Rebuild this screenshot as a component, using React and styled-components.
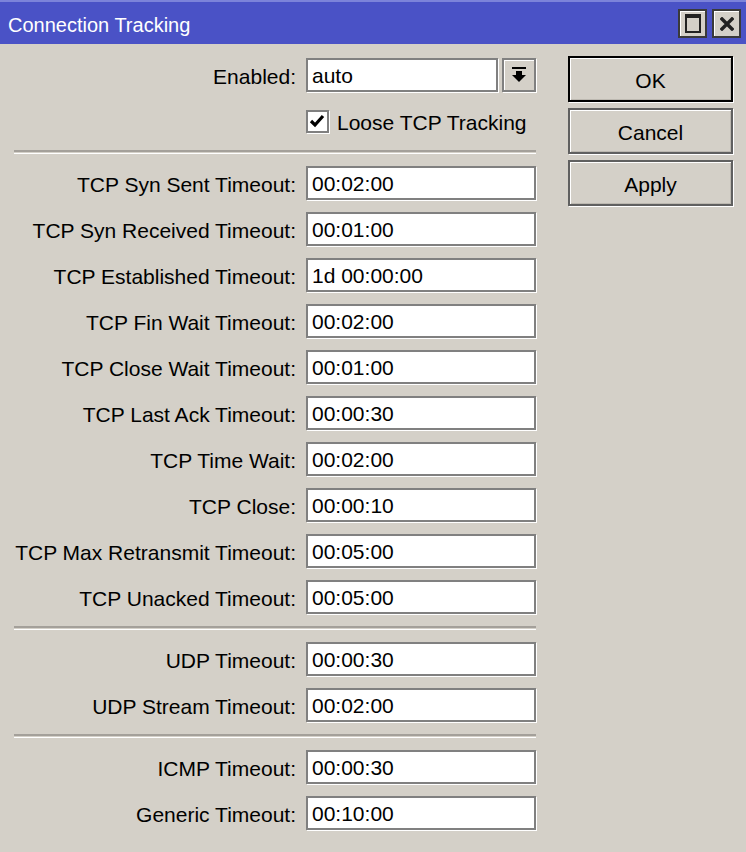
import styled, { createGlobalStyle } from "styled-components";

const GlobalStyle = createGlobalStyle`
    html, body {
        margin: 0;
        padding: 0;
        background: #d4d0c8;
    }
    * {
        box-sizing: border-box;
    }
`

const timeouts = [
    ["TCP Syn Sent Timeout:", "00:02:00"],
    ["TCP Syn Received Timeout:", "00:01:00"],
    ["TCP Established Timeout:", "1d 00:00:00"],
    ["TCP Fin Wait Timeout:", "00:02:00"],
    ["TCP Close Wait Timeout:", "00:01:00"],
    ["TCP Last Ack Timeout:", "00:00:30"],
    ["TCP Time Wait:", "00:02:00"],
    ["TCP Close:", "00:00:10"],
    ["TCP Max Retransmit Timeout:", "00:05:00"],
    ["TCP Unacked Timeout:", "00:05:00"],
]

const udp = [
    ["UDP Timeout:", "00:00:30"],
    ["UDP Stream Timeout:", "00:02:00"],
]

const other = [
    ["ICMP Timeout:", "00:00:30"],
    ["Generic Timeout:", "00:10:00"],
]

function Field({ label, value }){
    return(
        <>
            <Label>{label}</Label>
            <TextBox>{value}</TextBox>
        </>
    )
}

export default function App(){
    return(
        <Window>
            <GlobalStyle />
            <TitleBar>
                <Title>Connection Tracking</Title>
                <TitleButtons>
                    <TitleButton>
                        <svg width="16" height="19" viewBox="0 0 16 19">
                            <rect x="0" y="0" width="16" height="4" fill="#222" />
                            <rect x="0" y="0" width="2" height="19" fill="#222" />
                            <rect x="14" y="0" width="2" height="19" fill="#222" />
                            <rect x="0" y="17" width="16" height="2" fill="#222" />
                        </svg>
                    </TitleButton>
                    <TitleButton>
                        <svg width="14" height="14" viewBox="0 0 14 14">
                            <path d="M2 2 L12 12 M12 2 L2 12" stroke="#222" strokeWidth="3.4" strokeLinecap="square" />
                        </svg>
                    </TitleButton>
                </TitleButtons>
            </TitleBar>
            <Body>
                <Form>
                    <Label>Enabled:</Label>
                    <Combo>
                        <TextBox>auto</TextBox>
                        <DropButton>
                            <svg width="14" height="16" viewBox="0 0 14 16">
                                <rect x="0" y="0" width="14" height="2" fill="#000" />
                                <rect x="4" y="4" width="6" height="4" fill="#000" />
                                <polygon points="0,8 14,8 7,15" fill="#000" />
                            </svg>
                        </DropButton>
                    </Combo>

                    <span />
                    <CheckRow>
                        <CheckBox>
                            <svg width="19" height="19" viewBox="0 0 19 19">
                                <polyline points="3,9 7,13 15,4" fill="none" stroke="#000" strokeWidth="3.2" />
                            </svg>
                        </CheckBox>
                        <CheckText>Loose TCP Tracking</CheckText>
                    </CheckRow>

                    <Separator />
                    {timeouts.map(([l, v]) => <Field key={l} label={l} value={v} />)}
                    <Separator />
                    {udp.map(([l, v]) => <Field key={l} label={l} value={v} />)}
                    <Separator />
                    {other.map(([l, v]) => <Field key={l} label={l} value={v} />)}
                </Form>
                <Buttons>
                    <Button $default>OK</Button>
                    <Button>Cancel</Button>
                    <Button>Apply</Button>
                </Buttons>
            </Body>
        </Window>
    )
}

const Window = styled.div`
    width: 746px;
    height: 852px;
    background: #d4d0c8;
    font-family: "Liberation Sans", Arial, sans-serif;
    color: #000;
    overflow: hidden;
`

const TitleBar = styled.div`
    display: flex;
    align-items: center;
    justify-content: space-between;
    height: 44px;
    background: #4a52c6;
    border-top: 2px solid #7c83da;
    padding: 0 5px 0 8px;
`

const Title = styled.div`
    color: #ffffff;
    font-size: 20px;
    margin-top: 5px;
`

const TitleButtons = styled.div`
    display: flex;
    gap: 5px;
    margin-top: 1px;
`

const TitleButton = styled.div`
    width: 29px;
    height: 29px;
    display: flex;
    align-items: center;
    justify-content: center;
    background: #d4d0c8;
    border: 2px solid #3a3a3a;
    box-shadow: inset 1px 1px 0 #ffffff;
`

const Body = styled.div`
    display: flex;
    gap: 32px;
    padding: 12px 0 0 14px;
`

const Form = styled.div`
    display: grid;
    grid-template-columns: 282px 230px;
    column-gap: 10px;
    row-gap: 12px;
    margin-top: 2px;
    align-items: center;
`

const Label = styled.div`
    font-size: 21px;
    text-align: right;
    white-space: nowrap;
    padding-top: 3px;
`

const TextBox = styled.div`
    height: 34px;
    background: #ffffff;
    border: 2px solid #808080;
    box-shadow: 1px 1px 0 #ffffff;
    padding: 2px 4px 0;
    font-size: 21px;
    line-height: 28px;
    white-space: nowrap;
`

const Combo = styled.div`
    display: grid;
    grid-template-columns: 1fr 34px;
    gap: 4px;
`

const DropButton = styled.div`
    height: 34px;
    display: flex;
    align-items: center;
    justify-content: center;
    background: #d4d0c8;
    border: 2px solid #808080;
    box-shadow: inset 1px 1px 0 #ffffff, 1px 1px 0 #ffffff;
`

const CheckRow = styled.div`
    display: flex;
    align-items: center;
    gap: 8px;
    height: 34px;
    font-size: 21px;
    white-space: nowrap;
`

const CheckText = styled.span`
    padding-top: 3px;
`

const CheckBox = styled.div`
    width: 23px;
    height: 23px;
    background: #ffffff;
    border: 2px solid #808080;
    box-shadow: 1px 1px 0 #ffffff;
    display: flex;
`

const Separator = styled.div`
    grid-column: 1 / -1;
    height: 4px;
    border-top: 2px solid #a4a09a;
    border-bottom: 1px solid #ffffff;
`

const Buttons = styled.div`
    display: flex;
    flex-direction: column;
    gap: 6px;
`

const Button = styled.div`
    width: 165px;
    height: 46px;
    display: flex;
    align-items: center;
    justify-content: center;
    font-size: 21px;
    padding-top: 3px;
    background: #d4d0c8;
    border: 2px solid ${p => p.$default ? "#000000" : "#606060"};
    box-shadow: inset 1px 1px 0 #ffffff, inset -1px -1px 0 #bcb8b0, 1px 1px 0 #ffffff;
`
